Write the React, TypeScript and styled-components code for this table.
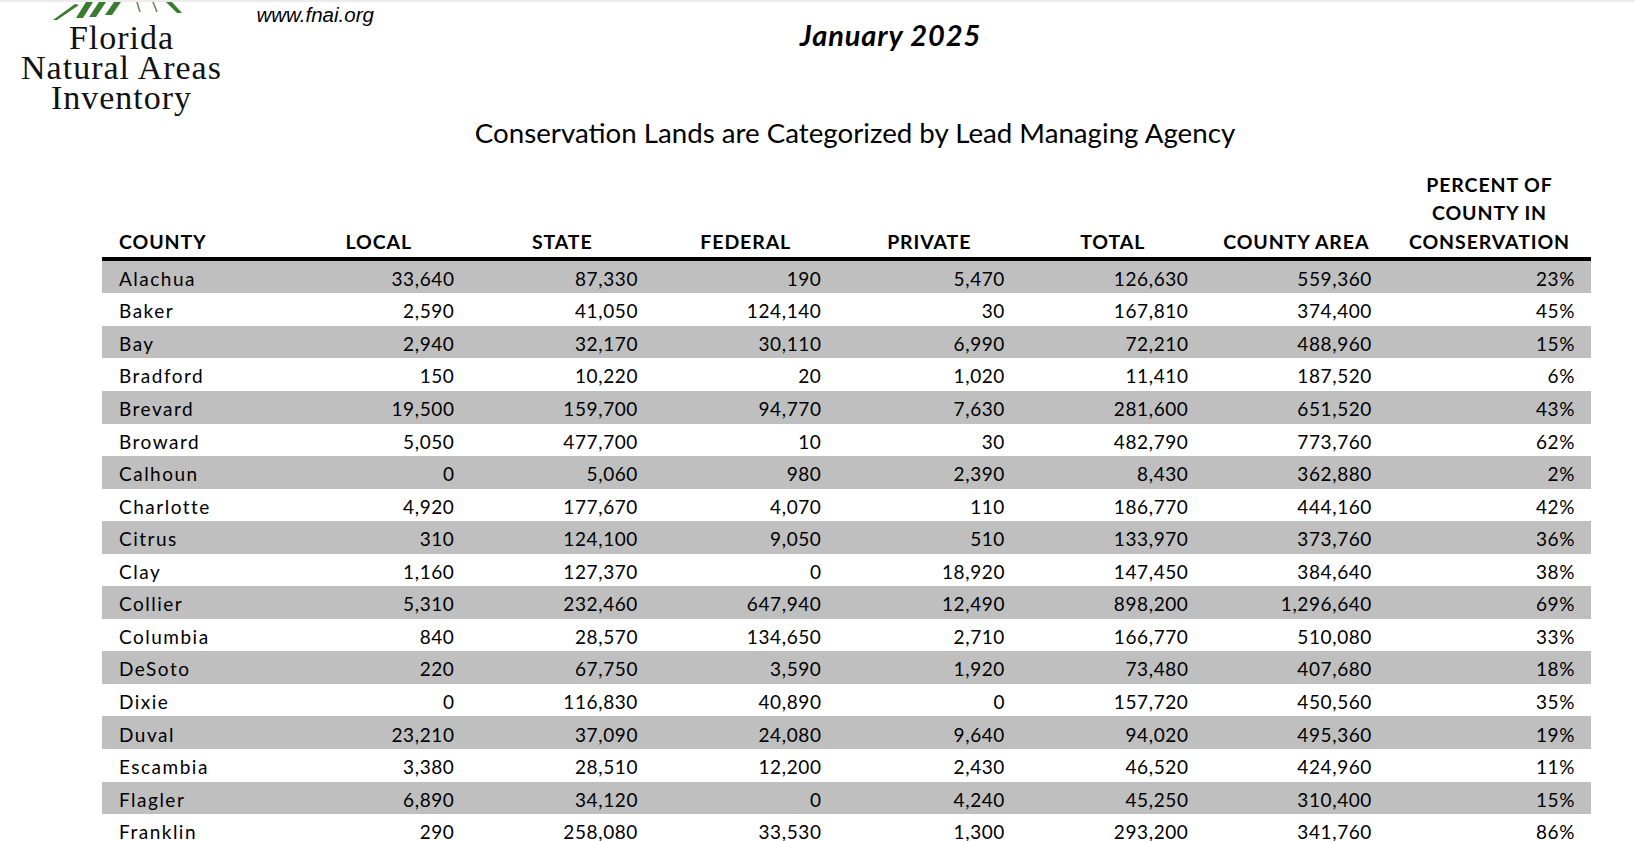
import styled, { createGlobalStyle } from "styled-components";

const GlobalStyle = createGlobalStyle`
  html, body {
    margin: 0;
    padding: 0;
    background: #ffffff;
    overflow: hidden;
  }
  body {
    font-family: 'Lato', 'Liberation Sans', sans-serif;
    color: #000;
  }
`;

const Page = styled.div`
  width: 1635px;
  border-top: 2px solid #ececec;
  box-sizing: border-box;
`;

// Top bar: logo, url, month
const TopBar = styled.header`
  display: grid;
  grid-template-columns: 243px 147px 1fr;
  align-items: start;
`;

const Logo = styled.div`
  display: flex;
  flex-direction: column;
  align-items: center;
`;

const Leaves = styled.svg`
  display: block;
  width: 243px;
  height: 18px;
  margin-bottom: 3px;
`;

const LogoText = styled.div`
  font-family: 'Liberation Serif', 'Times New Roman', serif;
  font-size: 34px;
  line-height: 30px;
  letter-spacing: 1px;
  text-align: center;
  color: #111;
`;

const Url = styled.div`
  margin-top: 3px;
  padding-left: 13.5px;
  font-family: 'Liberation Sans', Arial, sans-serif;
  font-style: italic;
  font-size: 20.5px;
  line-height: 20px;
  white-space: nowrap;
`;

const Month = styled.h1`
  margin: 16.5px 0 0;
  padding-right: 244px;
  text-align: center;
  font-size: 29px;
  line-height: 32px;
  font-weight: 700;
  font-style: italic;
  letter-spacing: 0.9px;
`;

const Subtitle = styled.h2`
  margin: 4px 0 0;
  padding-left: 75px;
  text-align: center;
  font-size: 27.7px;
  line-height: 32px;
  font-weight: 400;
`;

// Table
const cols = "185px repeat(6, 183.5px) 203px";

const Table = styled.div`
  margin: 21.7px 0 0 102px;
  width: 1489px;
`;

const HeadRow = styled.div`
  display: grid;
  grid-template-columns: ${cols};
  border-bottom: 4px solid #000;
`;

const HeadCell = styled.div<{ $left?: boolean }>`
  display: flex;
  align-items: flex-end;
  justify-content: ${({ $left }) => ($left ? "flex-start" : "center")};
  padding-left: ${({ $left }) => ($left ? "17px" : "0")};
  font-size: 19.5px;
  line-height: 28.7px;
  font-weight: 700;
  letter-spacing: 0.9px;
  text-align: center;
`;

const Row = styled.div<{ $shaded: boolean }>`
  display: grid;
  grid-template-columns: ${cols};
  height: 32.56px;
  background: ${({ $shaded }) => ($shaded ? "#bfbfbf" : "#ffffff")};
`;

const Cell = styled.div<{ $left?: boolean }>`
  display: flex;
  align-items: flex-end;
  justify-content: ${({ $left }) => ($left ? "flex-start" : "flex-end")};
  padding: ${({ $left }) => ($left ? "0 0 3.5px 17px" : "0 16px 3.5px 0")};
  font-size: 19px;
  line-height: 22px;
  letter-spacing: ${({ $left }) => ($left ? "1.5px" : "0.6px")};
  white-space: nowrap;
`;

const headers = ["LOCAL", "STATE", "FEDERAL", "PRIVATE", "TOTAL", "COUNTY AREA"];

const rows: string[][] = [
  ["Alachua", "33,640", "87,330", "190", "5,470", "126,630", "559,360", "23%"],
  ["Baker", "2,590", "41,050", "124,140", "30", "167,810", "374,400", "45%"],
  ["Bay", "2,940", "32,170", "30,110", "6,990", "72,210", "488,960", "15%"],
  ["Bradford", "150", "10,220", "20", "1,020", "11,410", "187,520", "6%"],
  ["Brevard", "19,500", "159,700", "94,770", "7,630", "281,600", "651,520", "43%"],
  ["Broward", "5,050", "477,700", "10", "30", "482,790", "773,760", "62%"],
  ["Calhoun", "0", "5,060", "980", "2,390", "8,430", "362,880", "2%"],
  ["Charlotte", "4,920", "177,670", "4,070", "110", "186,770", "444,160", "42%"],
  ["Citrus", "310", "124,100", "9,050", "510", "133,970", "373,760", "36%"],
  ["Clay", "1,160", "127,370", "0", "18,920", "147,450", "384,640", "38%"],
  ["Collier", "5,310", "232,460", "647,940", "12,490", "898,200", "1,296,640", "69%"],
  ["Columbia", "840", "28,570", "134,650", "2,710", "166,770", "510,080", "33%"],
  ["DeSoto", "220", "67,750", "3,590", "1,920", "73,480", "407,680", "18%"],
  ["Dixie", "0", "116,830", "40,890", "0", "157,720", "450,560", "35%"],
  ["Duval", "23,210", "37,090", "24,080", "9,640", "94,020", "495,360", "19%"],
  ["Escambia", "3,380", "28,510", "12,200", "2,430", "46,520", "424,960", "11%"],
  ["Flagler", "6,890", "34,120", "0", "4,240", "45,250", "310,400", "15%"],
  ["Franklin", "290", "258,080", "33,530", "1,300", "293,200", "341,760", "86%"],
];

const LeafMark = () => (
  <Leaves viewBox="0 0 243 18">
    <g fill="#3a7a31">
      <polygon points="53,18 57,18 79,3 75,2" />
      <polygon points="76,16 83,16 93,0 86,0" />
      <polygon points="89,15 96,15 106,0 99,0" />
      <polygon points="105,13 112,13 121,0 114,0" />
      <polygon points="166,0 172,0 182,11 177,11" />
    </g>
    <g stroke="#5f8f57" strokeWidth="1.6">
      <line x1="137" y1="0" x2="140" y2="10" />
      <line x1="153" y1="0" x2="157" y2="10" />
    </g>
  </Leaves>
);

export default function App() {
  return (
    <Page>
      <GlobalStyle />
      <TopBar>
        <Logo>
          <LeafMark />
          <LogoText>
            Florida
            <br />
            Natural Areas
            <br />
            Inventory
          </LogoText>
        </Logo>
        <Url>www.fnai.org</Url>
        <Month>January 2025</Month>
      </TopBar>

      <Subtitle>Conservation Lands are Categorized by Lead Managing Agency</Subtitle>

      <Table>
        <HeadRow>
          <HeadCell $left>COUNTY</HeadCell>
          {headers.map((h) => (
            <HeadCell key={h}>{h}</HeadCell>
          ))}
          <HeadCell>
            PERCENT OF
            <br />
            COUNTY IN
            <br />
            CONSERVATION
          </HeadCell>
        </HeadRow>
        {rows.map((r, i) => (
          <Row key={r[0]} $shaded={i % 2 === 0}>
            {r.map((v, j) => (
              <Cell key={j} $left={j === 0}>
                {v}
              </Cell>
            ))}
          </Row>
        ))}
      </Table>
    </Page>
  );
}
